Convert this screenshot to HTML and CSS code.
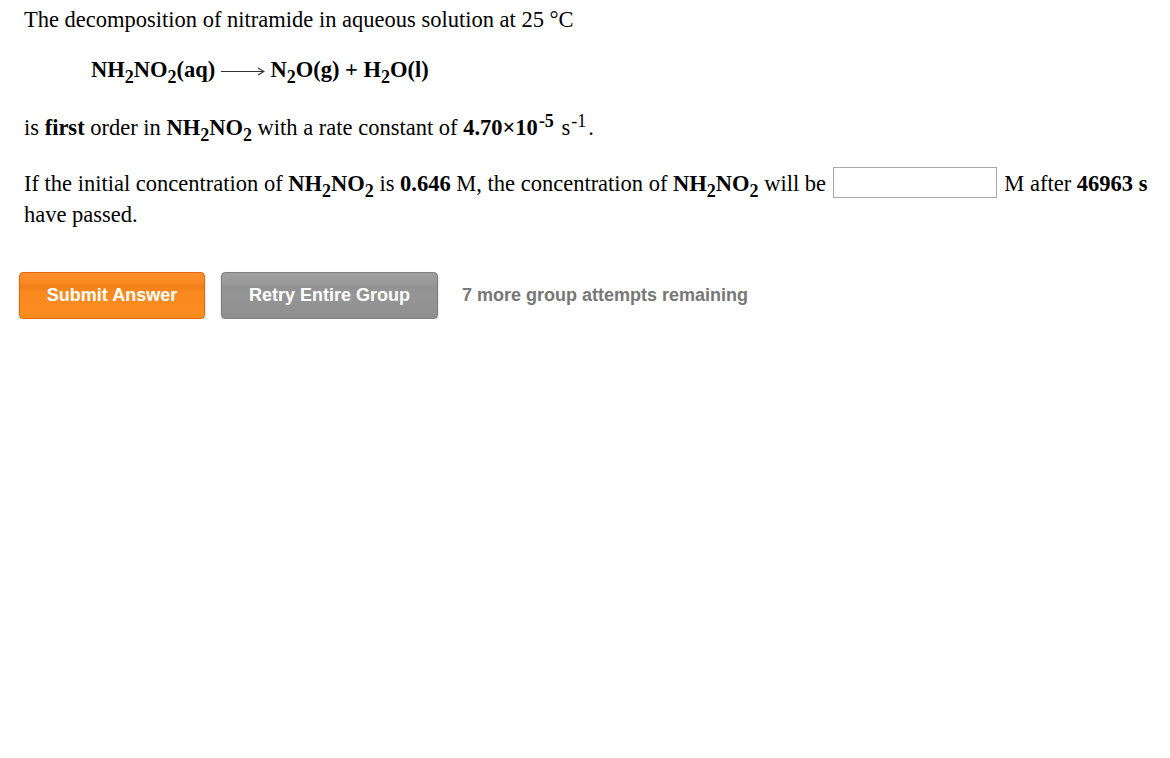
FILE: index.html
```html
<!DOCTYPE html>
<html>
<head>
<meta charset="utf-8">
<link rel="stylesheet" href="styles.css">
</head>
<body>
<div class="question">
  <p class="intro">The decomposition of nitramide in aqueous solution at 25 °C</p>
  <p class="equation"><b>NH<sub>2</sub>NO<sub>2</sub>(aq)</b> <svg class="arrow" width="44" height="10" viewBox="0 0 44 10"><path d="M0 5.5H42" stroke="#333" stroke-width="1.2" fill="none"/><path d="M37 2L43 5.5L37 9" stroke="#333" stroke-width="1.2" fill="none"/></svg> <b>N<sub>2</sub>O(g) + H<sub>2</sub>O(l)</b></p>
  <p class="line l3">is <b>first</b> order in <b>NH<sub>2</sub>NO<sub>2</sub></b> with a rate constant of <b>4.70×10<sup>-5</sup></b> s<sup>-1</sup>.</p>
  <p class="line l4">If the initial concentration of <b>NH<sub>2</sub>NO<sub>2</sub></b> is <b>0.646</b> M, the concentration of <b>NH<sub>2</sub>NO<sub>2</sub></b> will be <input class="answer" type="text"> M after <b>46963 s</b> have passed.</p>
</div>
<div class="actions">
  <button class="btn btn-submit">Submit Answer</button>
  <button class="btn btn-retry">Retry Entire Group</button>
  <span class="attempts">7 more group attempts remaining</span>
</div>
</body>
</html>
```
FILE: styles.css
```css
body {
  margin: 0;
  background: #fff;
  font-family: "Liberation Serif", "Times New Roman", serif;
  font-size: 22.5px;
  color: #000;
}
.question {
  padding: 7px 18px 0 24px;
}
.question p {
  margin: 0;
}
.intro {
  line-height: 26px;
}
.equation {
  margin-top: 22px !important;
  padding-left: 67px;
  line-height: 30px;
}
.arrow {
  vertical-align: 1px;
}
.line {
  line-height: 31px;
}
.l3 {
  margin-top: 27px !important;
}
.l3 sup {
  padding: 0 2px 0 1px;
}
.l4 {
  margin-top: 25px !important;
}
sub, sup {
  font-size: 80%;
  line-height: 0;
}
.answer {
  width: 164px;
  height: 31px;
  box-sizing: border-box;
  border: 1px solid #aaa;
  vertical-align: top;
  margin: -1px 2px 0 1px;
  padding: 0;
  font-size: 16px;
}
.actions {
  display: flex;
  align-items: center;
  gap: 16px;
  padding: 42px 0 0 19px;
}
.btn {
  font-family: "Liberation Sans", Arial, sans-serif;
  font-weight: bold;
  font-size: 18px;
  color: #fff;
  border-radius: 4px;
  height: 47px;
  padding: 0;
  cursor: pointer;
  box-shadow: 0 1px 2px rgba(0,0,0,0.25);
}
.btn-submit {
  width: 186px;
  background: linear-gradient(#fb9030 0%, #f98a20 20%, #f0801a 30%, #f98a1f 45%, #f98b1f 100%);
  border: 1px solid #e8650a;
}
.btn-retry {
  width: 217px;
  background: linear-gradient(#a0a0a0 0%, #9a9a9a 20%, #929292 32%, #959595 50%, #8f8f8f 100%);
  border: 1px solid #7e7e7e;
}
.attempts {
  font-family: "Liberation Sans", Arial, sans-serif;
  font-weight: bold;
  font-size: 18px;
  color: #777;
  margin-left: 8px;
}
```
